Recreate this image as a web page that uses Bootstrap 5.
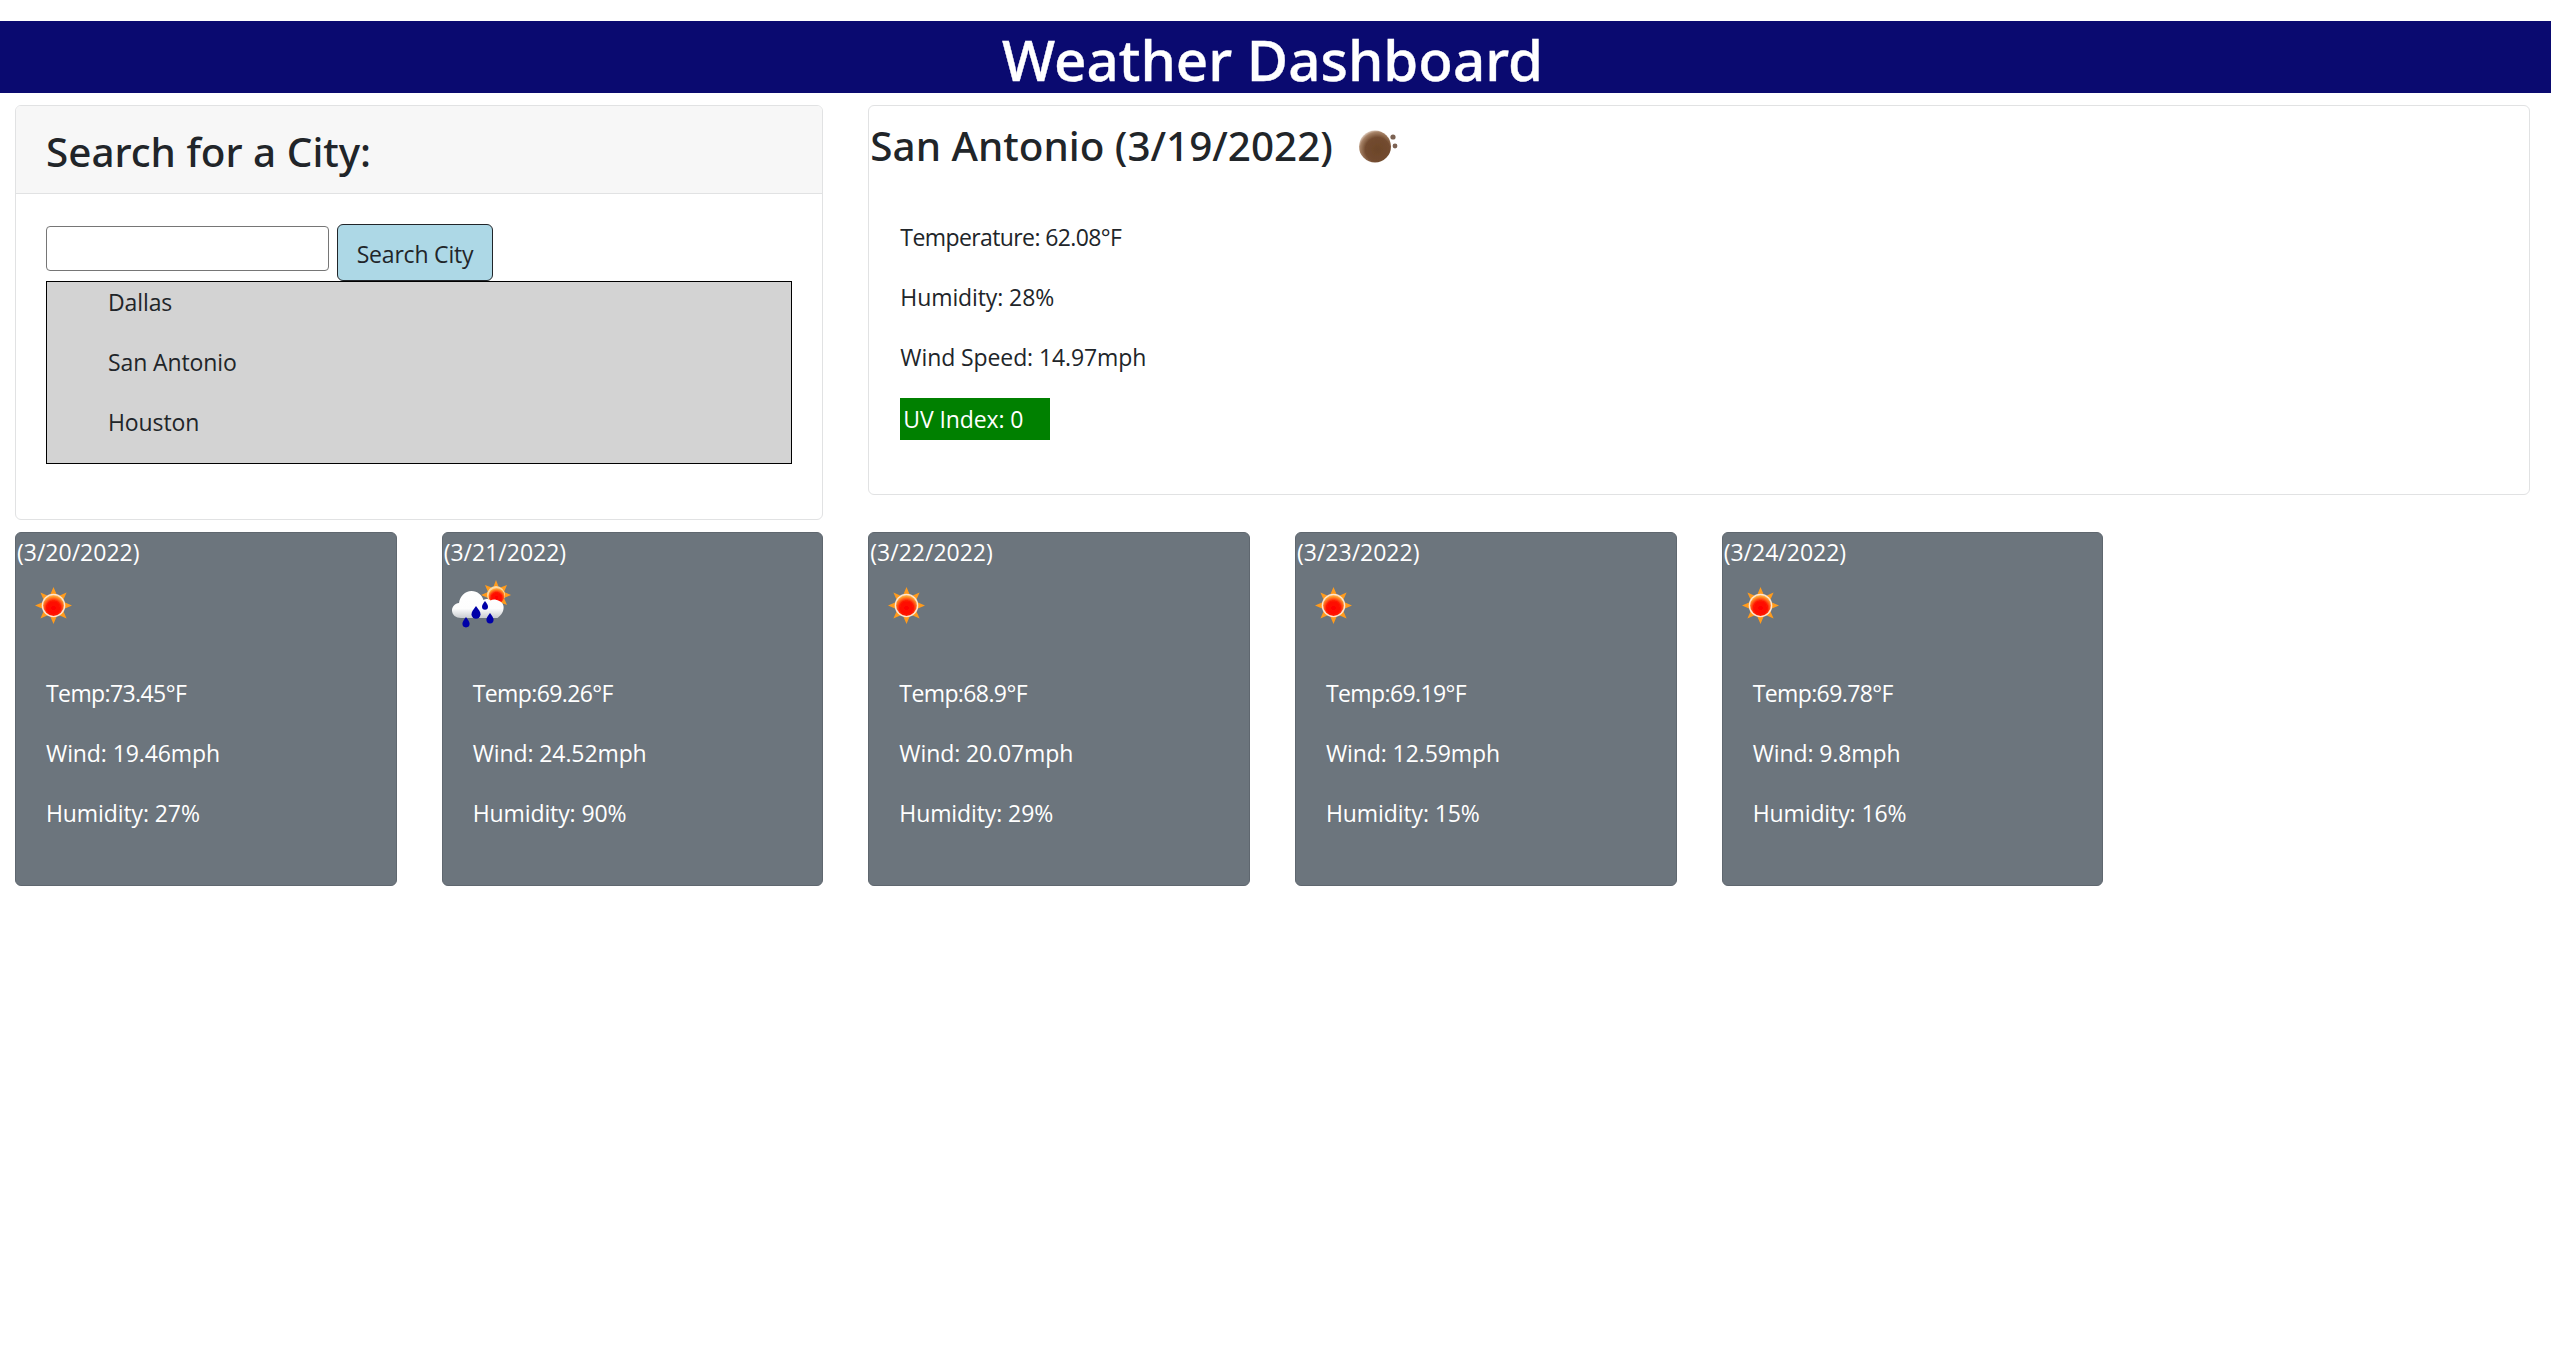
<!doctype html>
<html lang="en"><head><meta charset="utf-8"><title>Weather Dashboard</title>
<link rel="stylesheet" href="https://cdn.jsdelivr.net/npm/bootstrap@5.3.0/dist/css/bootstrap.min.css">
<style>
body{font-family:"Open Sans","Noto Sans",sans-serif;font-size:23px;line-height:36px;color:#212529;background:#fff}
p{margin-bottom:24px}
.dash-title{margin-top:21px;height:72px;padding-right:6px;background:#0a0a70;color:#fff;text-align:center}
.dash-title h1{font-family:"Noto Sans","Open Sans",sans-serif;font-size:56.5px;line-height:78px;height:72px;font-weight:500;margin:0;-webkit-text-stroke:.4px #fff}
.page-wrap{padding:12px 21px 0 15px}
.gut{--bs-gutter-x:45px;--bs-gutter-y:0}
.panel{border:1px solid #e1e2e3;border-radius:6px}
.panel-head{height:88px;padding:4px 30px 0;background:#f7f7f7;border-bottom:1px solid #e1e2e3;border-radius:5px 5px 0 0}
.head-text{font-family:"Noto Sans","Open Sans",sans-serif;font-size:40.4px;line-height:50px;font-weight:500;margin:0}
.panel-inner{padding:30px}
.city-input{width:283px;height:45px;margin-top:2px;border:1px solid #767676;border-radius:4px;background:#fff}
.city-btn{width:156px;height:57px;font-size:23px;line-height:36px;padding:3px 0 0;background:#add8e6;border:1px solid #212529;border-radius:6px;color:#212529;letter-spacing:-.2px}
.city-list{margin:0 0 25px;height:183px;padding:2px 0 0 61px;background:#d3d3d3;border:1px solid #000;letter-spacing:-.1px}
.now-title{padding:5px 0 0 1px;height:75px;margin-bottom:38px;gap:5px}
.now-body{padding:0 30px 30px 31px}
.uv-box{width:150px;height:42px;margin-top:-1px;padding-left:3px;line-height:42px;background:#008000;color:#fff;margin-bottom:24px}
.fore-row{margin-top:12px}
.fore-card{height:354px;border:1px solid #5f676f;border-radius:6px;background:#6c757d;color:#fff}
.fore-date{line-height:36px;padding:1px 0 0 1px}
.fore-icon{margin-top:-2px}
.fore-body{padding:32px 30px 0}
.ico{display:block;width:75px;height:75px;flex:none}
.defs-holder{display:block;width:0;height:0;overflow:hidden}
.t1{letter-spacing:-.6px}
.t3{letter-spacing:-.1px}
</style></head>
<body>
<svg class="defs-holder" aria-hidden="true">
<defs>
<filter id="soft" x="-10%" y="-10%" width="120%" height="120%"><feGaussianBlur stdDeviation=".5"/></filter>
<radialGradient id="sunDisc" cx=".5" cy=".62" r=".62"><stop offset="0" stop-color="#ff0000"/><stop offset=".55" stop-color="#ff1400"/><stop offset=".9" stop-color="#ffa030"/><stop offset="1" stop-color="#ffc070"/></radialGradient>
<radialGradient id="moonDisc" cx=".58" cy=".6" r=".62"><stop offset="0" stop-color="#6c4529"/><stop offset=".62" stop-color="#734c30"/><stop offset=".88" stop-color="#a58166"/><stop offset="1" stop-color="#dcc8b8"/></radialGradient>
<linearGradient id="cloudFill" x1="0" y1="0" x2="0" y2="1"><stop offset="0" stop-color="#fff"/><stop offset=".65" stop-color="#fdfdfd"/><stop offset="1" stop-color="#c9ccd0"/></linearGradient>
<symbol id="sunIcon" viewBox="0 0 75 75">
<g filter="url(#soft)">
<polygon fill="#ff9b1e" points="37.500,19 41.500,28.400 50.600,24.400 46.600,33.500 56,37.500 46.600,41.500 50.600,50.600 41.500,46.600 37.500,56 33.500,46.600 24.400,50.600 28.400,41.500 19,37.500 28.400,33.500 24.400,24.400 33.500,28.400"/>
<circle cx="37.5" cy="37.5" r="11.8" fill="#ffe6cf"/>
<circle cx="37.5" cy="37.5" r="10.4" fill="url(#sunDisc)"/>
</g></symbol>
</defs></svg>

<header class="dash-title"><h1>Weather Dashboard</h1></header>

<main class="page-wrap">
<div class="row gut align-items-start">
 <div class="col-4">
  <section class="panel">
   <div class="panel-head d-flex align-items-center"><h3 class="head-text">Search for a City:</h3></div>
   <div class="panel-inner">
    <form class="d-flex align-items-start gap-2">
     <input class="city-input" type="text" aria-label="City">
     <button class="city-btn" type="button">Search City</button>
    </form>
    <ul class="city-list list-unstyled">
     <li class="mb-4">Dallas</li>
     <li class="mb-4">San Antonio</li>
     <li class="mb-4">Houston</li>
    </ul>
   </div>
  </section>
 </div>
 <div class="col-8">
  <section class="panel">
   <div class="now-title d-flex align-items-center">
    <h3 class="head-text">San Antonio (3/19/2022)</h3>
    <svg class="ico" viewBox="0 0 75 75" aria-hidden="true"><g filter="url(#soft)"><circle cx="37" cy="37.500" r="16" fill="url(#moonDisc)"/><circle cx="55" cy="28" r="2.600" fill="#7b6252"/><circle cx="57" cy="37" r="2.400" fill="#7b6252"/></g></svg>
   </div>
   <div class="now-body">
    <p class="t1">Temperature: 62.08°F</p>
    <p class="t3">Humidity: 28%</p>
    <p class="t3">Wind Speed: 14.97mph</p>
    <div class="uv-box t3">UV Index: 0</div>
   </div>
  </section>
 </div>
</div>

<div class="row gut fore-row">
 <div class="col-2"><article class="fore-card">
  <div class="fore-date">(3/20/2022)</div>
  <svg class="ico fore-icon" aria-hidden="true"><use href="#sunIcon"/></svg>
  <div class="fore-body"><p class="t1">Temp:73.45°F</p><p class="t3">Wind: 19.46mph</p><p class="t3">Humidity: 27%</p></div>
 </article></div>
 <div class="col-2"><article class="fore-card">
  <div class="fore-date">(3/21/2022)</div>
  <svg class="ico fore-icon" viewBox="0 0 75 75" aria-hidden="true"><g filter="url(#soft)">
   <polygon fill="#ff9b1e" points="53,12 56,20 64,17 61,24 68,27 61,30 64,37 56,34 53,42 50,34 42,37 45,30 38,27 45,24 42,17 50,20"/>
   <circle cx="53" cy="27" r="9" fill="#ffd9a0"/><circle cx="53.5" cy="28" r="8" fill="url(#sunDisc)"/>
   <path fill="url(#cloudFill)" d="M18 50c-5 0-9-3-9-7.500 0-4 3-7 7-7.500 1-7 6-12 12.500-12 6 0 10.500 4 12 9 2-1.500 5-1.500 7 .5 1.500-1 4-1.300 6-.5 3 1 6 1.500 7 6 .7 5-2 9-6 12z"/>
   <path fill="#0000a8" d="M23 49c2.500 3.500 3.600 5 3.600 6.800a3.600 3.600 0 0 1-7.200 0c0-1.800 1.100-3.300 3.600-6.800z"/>
   <path fill="#0000a8" d="M33 38c3 4 4.500 6 4.500 8.300a4.500 4.500 0 0 1-9 0c0-2.300 1.500-4.300 4.500-8.300z"/>
   <path fill="#0000a8" d="M42 33c2 2.800 3 4.100 3 5.700a3 3 0 0 1-6 0c0-1.600 1-2.900 3-5.700z"/>
   <path fill="#0000a8" d="M47 45c2.500 3.500 3.600 5 3.600 6.800a3.600 3.600 0 0 1-7.200 0c0-1.800 1.100-3.300 3.600-6.800z"/>
  </g></svg>
  <div class="fore-body"><p class="t1">Temp:69.26°F</p><p class="t3">Wind: 24.52mph</p><p class="t3">Humidity: 90%</p></div>
 </article></div>
 <div class="col-2"><article class="fore-card">
  <div class="fore-date">(3/22/2022)</div>
  <svg class="ico fore-icon" aria-hidden="true"><use href="#sunIcon"/></svg>
  <div class="fore-body"><p class="t1">Temp:68.9°F</p><p class="t3">Wind: 20.07mph</p><p class="t3">Humidity: 29%</p></div>
 </article></div>
 <div class="col-2"><article class="fore-card">
  <div class="fore-date">(3/23/2022)</div>
  <svg class="ico fore-icon" aria-hidden="true"><use href="#sunIcon"/></svg>
  <div class="fore-body"><p class="t1">Temp:69.19°F</p><p class="t3">Wind: 12.59mph</p><p class="t3">Humidity: 15%</p></div>
 </article></div>
 <div class="col-2"><article class="fore-card">
  <div class="fore-date">(3/24/2022)</div>
  <svg class="ico fore-icon" aria-hidden="true"><use href="#sunIcon"/></svg>
  <div class="fore-body"><p class="t1">Temp:69.78°F</p><p class="t3">Wind: 9.8mph</p><p class="t3">Humidity: 16%</p></div>
 </article></div>
</div>
</main>
</body></html>
